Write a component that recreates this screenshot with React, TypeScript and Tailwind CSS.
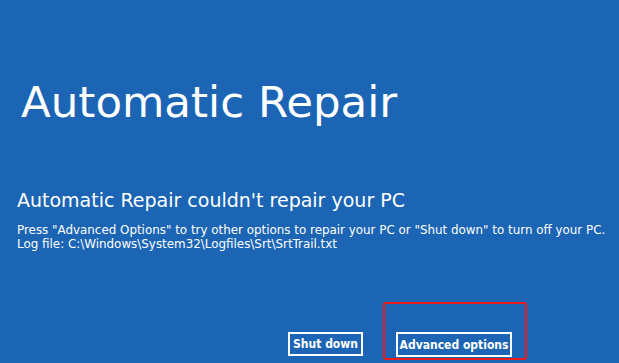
import React from 'react'

export default function App() {
  return (
    <div
      className="relative h-[363px] w-[619px] overflow-hidden bg-[#1b65b4] text-white"
      style={{ fontFamily: '"DejaVu Sans", Verdana, sans-serif' }}
    >
      <div className="pl-[21px] pt-[74px]">
        <h1 className="text-[43.5px] leading-[56px]">Automatic Repair</h1>
      </div>

      <div className="pl-[17px] pt-[58px]">
        <h2 className="text-[19px] leading-[24px]">Automatic Repair couldn't repair your PC</h2>
        <p className="mt-[11px] text-[11.9px] leading-[14px]">
          Press "Advanced Options" to try other options to repair your PC or "Shut down" to turn off your PC.
        </p>
        <p className="text-[11.9px] leading-[14px]">Log file: C:\Windows\System32\Logfiles\Srt\SrtTrail.txt</p>
      </div>

      <div
        className="absolute left-[288px] top-[332px] flex gap-[33px]"
        style={{ fontFamily: '"DejaVu Sans Condensed", "DejaVu Sans", sans-serif' }}
      >
        <button className="h-[24px] w-[75px] border-2 border-white text-[12px] font-bold">Shut down</button>
        <button className="h-[25px] w-[116px] border-2 border-white text-[12px] font-bold">Advanced options</button>
      </div>

      {/* highlight around the advanced options button */}
      <div className="absolute left-[383px] top-[302px] h-[58px] w-[144px] rounded-[3px] border-[2.5px] border-[#ec1c1c]" />
    </div>
  )
}
